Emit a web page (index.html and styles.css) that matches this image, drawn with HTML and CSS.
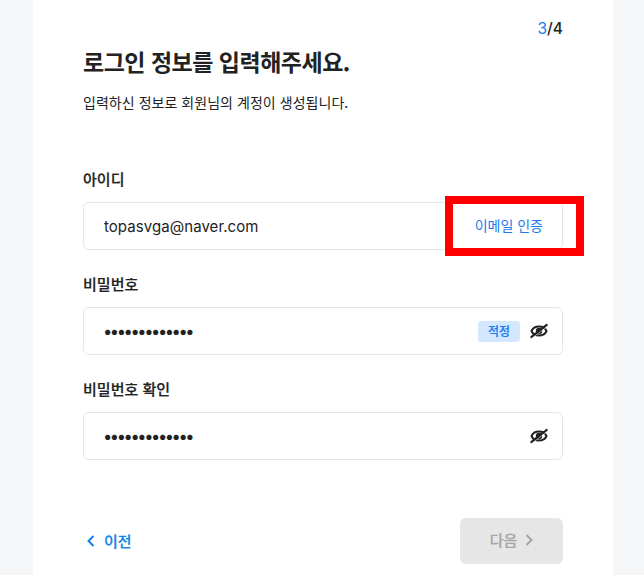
FILE: index.html
```
<!DOCTYPE html>
<html lang="ko">
<head>
<meta charset="utf-8">
<title>로그인 정보</title>
<link rel="stylesheet" href="styles.css">
</head>
<body>
<main class="panel">
  <div class="step"><span class="current">3</span>/4</div>
  <h1>로그인 정보를 입력해주세요.</h1>
  <p class="intro">입력하신 정보로 회원님의 계정이 생성됩니다.</p>
  <section class="group">
    <div class="label">아이디</div>
    <div class="field">
      <span class="email">topasvga@naver.com</span>
      <span class="verify">이메일 인증</span>
      <span class="highlight"></span>
    </div>
  </section>
  <section class="group">
    <div class="label">비밀번호</div>
    <div class="field">
      <span class="dots">•••••••••••••</span>
      <span class="badge">적정</span>
      <svg class="eye" viewBox="0 0 20 18"><path d="M2.5 9C5 3 15 3 17.5 9C15 15 5 15 2.5 9Z" fill="none" stroke="currentColor" stroke-width="2"/><circle cx="10" cy="9" r="3.2" fill="currentColor"/><path d="M2 16.8L19 4" stroke="#fff" stroke-width="0.7"/><path d="M1.6 15.6L18.4 2.4" stroke="currentColor" stroke-width="2"/></svg>
    </div>
  </section>
  <section class="group">
    <div class="label">비밀번호 확인</div>
    <div class="field">
      <span class="dots">•••••••••••••</span>
      <svg class="eye" viewBox="0 0 20 18"><path d="M2.5 9C5 3 15 3 17.5 9C15 15 5 15 2.5 9Z" fill="none" stroke="currentColor" stroke-width="2"/><circle cx="10" cy="9" r="3.2" fill="currentColor"/><path d="M2 16.8L19 4" stroke="#fff" stroke-width="0.7"/><path d="M1.6 15.6L18.4 2.4" stroke="currentColor" stroke-width="2"/></svg>
    </div>
  </section>
  <footer class="actions">
    <span class="prev"><svg class="chevron" viewBox="0 0 8 12"><path d="M6.5 1L1.5 6L6.5 11"/></svg>이전</span>
    <span class="next">다음<svg class="chevron" viewBox="0 0 8 12"><path d="M1.5 1L6.5 6L1.5 11"/></svg></span>
  </footer>
</main>
</body>
</html>
```
FILE: styles.css
```
* { box-sizing: border-box; }
body {
  margin: 0;
  height: 575px;
  overflow: hidden;
  background: #f5f6f8;
  color: #222;
  font-family: Inter, "Noto Sans CJK KR", sans-serif;
}
.panel {
  width: 580px;
  height: 575px;
  margin-left: 33px;
  padding: 18px 50px 0;
  background: #fff;
}
.step {
  height: 22px;
  line-height: 22px;
  font-size: 15.5px;
  font-weight: 500;
  text-align: right;
}
.current { color: #1a7cec; font-weight: 400; }
h1 {
  margin: 3px 0 0;
  height: 36px;
  line-height: 36px;
  font-family: "Noto Sans CJK KR", sans-serif;
  font-size: 23px;
  font-weight: 700;
  letter-spacing: -0.5px;
  white-space: nowrap;
}
.intro {
  margin: 13px 0 0;
  height: 20px;
  line-height: 20px;
  font-family: "Noto Sans CJK KR", sans-serif;
  font-size: 14px;
  letter-spacing: 0.04px;
  white-space: nowrap;
}
.group { height: 105px; }
.intro + .group { margin-top: 57px; }
.label {
  height: 33px;
  line-height: 22px;
  font-size: 15px;
  font-weight: 500;
  letter-spacing: 0.05px;
  -webkit-text-stroke: 0.2px currentColor;
}
.field {
  position: relative;
  display: flex;
  align-items: center;
  height: 48px;
  padding: 0 13px 0 20px;
  border: 1px solid #e5e5e5;
  border-radius: 6px;
}
.email { font-size: 15px; letter-spacing: 0.06px; }
.verify {
  margin-left: auto;
  padding: 0 6px 2px 0;
  font-size: 14px;
  color: #1a7cec;
}
.highlight {
  position: absolute;
  left: 361px;
  top: -7px;
  width: 139px;
  height: 60px;
  border: 8px solid #f00;
}
.dots {
  font-family: Inter, sans-serif;
  font-size: 16.5px;
  letter-spacing: -2.42px;
  margin: 0 auto 0 -1px;
}
.badge {
  width: 42px;
  height: 21px;
  margin-right: 9px;
  border-radius: 3px;
  background: #d3e8ff;
  color: #1a7cec;
  font-size: 12px;
  font-weight: 500;
  line-height: 21px;
  text-align: center;
  -webkit-text-stroke: 0.2px currentColor;
}
.eye { width: 20px; height: 18px; }
.actions {
  display: flex;
  align-items: center;
  justify-content: space-between;
  height: 46px;
  margin-top: 34px;
}
.prev, .next {
  display: flex;
  align-items: center;
  font-size: 15px;
  font-weight: 500;
  -webkit-text-stroke: 0.2px currentColor;
}
.prev { gap: 9px; padding: 0 0 1px 4px; color: #1282e8; }
.next {
  gap: 8px;
  justify-content: center;
  width: 103px;
  height: 46px;
  padding-bottom: 3px;
  border-radius: 6px;
  background: #e6e6e6;
  color: #a6a6a6;
}
.chevron {
  width: 8px;
  height: 12px;
  fill: none;
  stroke: currentColor;
  stroke-width: 2;
}
```
